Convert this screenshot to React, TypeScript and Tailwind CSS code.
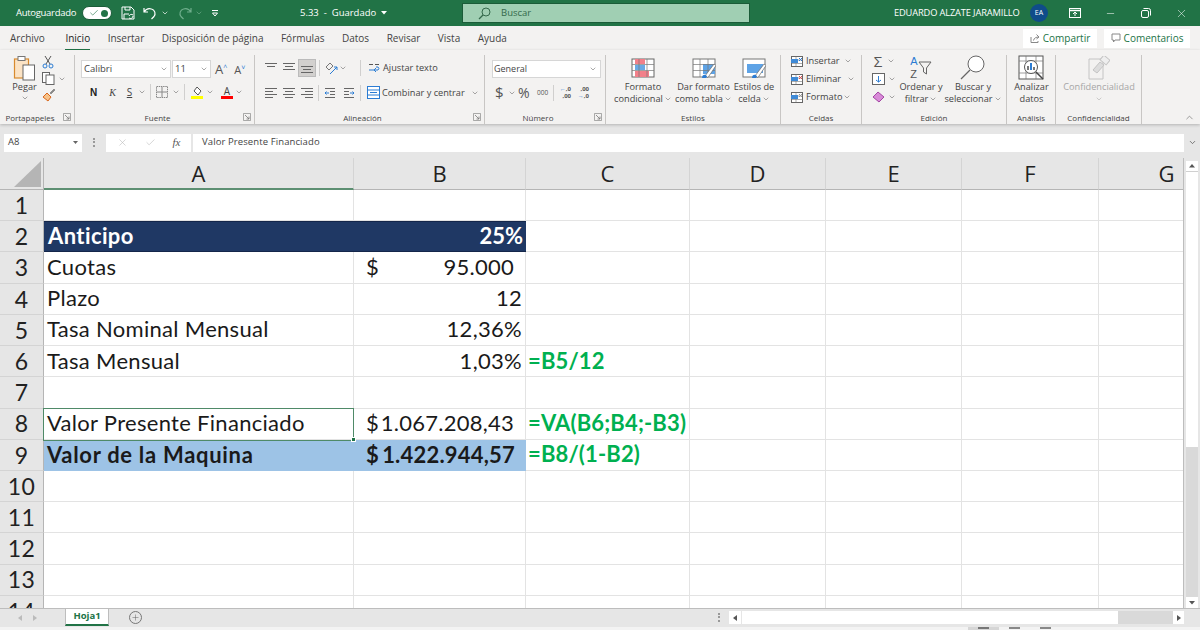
import type { ReactNode } from 'react';
import { Check, ChevronDown, ChevronUp, Minus, Plus, X } from 'lucide-react';

const ui = 'font-["Open_Sans",sans-serif]';
const sheet = 'font-["Lato",sans-serif]';

function Caret({ className = '' }: { className?: string }) {
  return <ChevronDown size={8} strokeWidth={1.5} className={`shrink-0 text-[#555] ${className}`} />;
}

function Launcher() {
  return (
    <svg width="8" height="8" viewBox="0 0 8 8" className="absolute right-[3px] bottom-[3px]" fill="none" stroke="#777">
      <path d="M.5 7.500V.5h7v7z" strokeWidth=".6" />
      <path d="M2 2l4 4M6 3.500V6H3.500" strokeWidth=".8" />
    </svg>
  );
}

function Group({ width, label, launcher = false, children }: { width: number; label: string; launcher?: boolean; children: ReactNode }) {
  return (
    <div style={{ width }} className="relative flex flex-col shrink-0 h-[69px] border-r border-[#c8c6c4]">
      {launcher && <Launcher />}
      <div className="h-[57px] flex-none">{children}</div>
      <div className={`h-[12px] flex items-center justify-center text-[8px] leading-none text-[#444] whitespace-nowrap ${launcher ? 'pr-[14px]' : ''}`}>{label}</div>
    </div>
  );
}

function Sep() {
  return <div className="w-px h-[16px] bg-[#d0cfce] shrink-0" />;
}

function AlignIcon({ lines }: { lines: [number, number][] }) {
  return (
    <svg width="14" height="14" viewBox="0 0 14 14" stroke="#666" strokeWidth="1" className="shrink-0">
      {lines.map(([x1, x2], i) => (
        <path key={i} d={`M${x1} ${2.500 + i * 3}H${x2}`} />
      ))}
    </svg>
  );
}

function BigIcon({ kind }: { kind: 'cond' | 'table' | 'style' }) {
  return (
    <svg width="24" height="20" viewBox="0 0 24 20" className="shrink-0">
      {kind === 'cond' && (
        <>
          <rect x="1" y="1" width="22" height="18" fill="#fff" stroke="#666" />
          <rect x="4" y="1" width="10" height="5" fill="#f2808a" />
          <rect x="4" y="7" width="10" height="5" fill="#6aa9e4" />
          <rect x="4" y="13" width="14" height="6" fill="#f2808a" />
        </>
      )}
      {kind !== 'cond' && (
        <>
          <rect x="1" y="1" width="22" height="18" fill="#fff" stroke="#777" />
          <rect x={kind === 'table' ? 11 : 5} y="6" width={kind === 'table' ? 12 : 16} height={kind === 'table' ? 10 : 9} fill="#5ea3e6" />
        </>
      )}
      <path d="M1 6.500H23M1 12.500H23M8 1V19M16 1V19" stroke={kind === 'style' ? 'none' : '#777'} strokeWidth=".7" />
      {kind !== 'cond' && <path d="M13 18L22 6l2 1.500-8 12z" fill="#fff" stroke="#666" strokeWidth=".7" />}
      {kind !== 'cond' && <path d="M10 20c0-3 2-4 4-3l1 1.500-1 1.500z" fill="#2b7cd3" />}
    </svg>
  );
}

function BigItem({ width, icon, lines, grey = false }: { width: number; icon: ReactNode; lines: ReactNode[]; grey?: boolean }) {
  return (
    <div style={{ width }} className={`flex flex-col items-center shrink-0 ${grey ? 'text-[#a6a6a6]' : 'text-[#444]'}`}>
      <div className="h-[25px] flex items-center justify-center">{icon}</div>
      <div className="mt-[1px] text-[9.200px] leading-[12px] text-center whitespace-nowrap flex flex-col items-center">
        {lines.map((l, i) => (
          <div key={i} className="flex items-center justify-center gap-[1px] h-[12px]">{l}</div>
        ))}
      </div>
    </div>
  );
}

function CellRow({ icon, text, width }: { icon: ReactNode; text: string; width: number }) {
  return (
    <div className="flex items-center h-[18px] text-[9.200px] text-[#444] whitespace-nowrap">
      {icon}
      <span className="ml-[2px]" style={{ width }}>{text}</span>
      <Caret />
    </div>
  );
}

function CellsIcon({ mark }: { mark: string }) {
  return (
    <svg width="14" height="13" viewBox="0 0 14 13" className="shrink-0">
      <rect x="1.500" y="1.500" width="11" height="10" fill="#fff" stroke="#666" />
      <path d="M1.500 5H12.500M1.500 8.500H12.500M6 1.500V11.500" stroke="#777" strokeWidth=".6" />
      <rect x="1" y="4" width="7" height="4" fill="#3f8ad6" />
      <path d="M9 3l3 3M12 3L9 6" stroke={mark} strokeWidth="1" />
    </svg>
  );
}

function Ribbon() {
  return (
    <div className={`relative z-10 h-[74px] bg-[#f3f2f1] flex items-start pt-[5px] shadow-[0_1px_3px_rgba(0,0,0,0.22)] ${ui}`}>
      <Group width={75} label="Portapapeles" launcher>
        <div className="flex pl-[11px]">
          <div className="flex flex-col items-center w-[27px] text-[#444]">
            <svg width="23" height="26" viewBox="0 0 23 26" fill="none">
              <rect x="1.500" y="4" width="14" height="19" fill="#fbe3c5" stroke="#d88a2e" strokeWidth="1.200" />
              <rect x="5" y="1.500" width="7" height="4" fill="#fff" stroke="#777" />
              <rect x="10" y="10" width="11.500" height="15" fill="#fff" stroke="#666" />
            </svg>
            <span className="text-[9.200px] leading-[12px]">Pegar</span>
            <Caret className="mt-[1px]" />
          </div>
          <div className="flex flex-col ml-[4px] gap-[3px]">
            <svg width="12" height="14" viewBox="0 0 12 14" fill="none" stroke="#555">
              <path d="M3 1l5 8M9 1L4 9" />
              <circle cx="3" cy="11" r="2" stroke="#2b7cd3" />
              <circle cx="9" cy="11" r="2" stroke="#2b7cd3" />
            </svg>
            <div className="flex items-center gap-[2px]">
              <svg width="14" height="13" viewBox="0 0 14 13" fill="#fff" stroke="#666">
                <rect x=".5" y=".5" width="7" height="10" />
                <rect x="4" y="3" width="8" height="9.500" />
              </svg>
              <Caret />
            </div>
            <svg width="14" height="14" viewBox="0 0 14 14" fill="none">
              <path d="M1 9l4-4 4 4-3 4z" fill="#f7c38a" stroke="#d9681d" />
              <path d="M8 5l4-4 1 1-4 4z" fill="#888" stroke="#666" strokeWidth=".5" />
            </svg>
          </div>
        </div>
      </Group>

      <Group width={180} label="Fuente" launcher>
        <div className="pl-[6px] pt-[5px] flex flex-col gap-[6px]">
          <div className="flex items-center">
            <div className="w-[90px] h-[18px] bg-white border border-[#d6d6d6] flex items-center justify-between px-[2px] text-[9.500px] text-[#444]">
              Calibri <Caret />
            </div>
            <div className="w-[39px] h-[18px] ml-[1px] bg-white border border-[#d6d6d6] flex items-center justify-between px-[2px] text-[9.500px] text-[#444]">
              11 <Caret />
            </div>
            <span className="ml-[4px] text-[13px] leading-none text-[#555]">A<sup className="text-[7px] text-[#2b7cd3]">^</sup></span>
            <span className="ml-[7px] text-[11px] leading-none text-[#555]">A<sup className="text-[7px] text-[#2b7cd3]">˅</sup></span>
          </div>
          <div className="flex items-center text-[#444] h-[16px]">
            <span className="ml-[3px] w-[19px] text-center text-[10px] font-bold font-['Liberation_Sans',sans-serif] text-[#222]">N</span>
            <span className="w-[19px] text-center text-[10px] italic font-['Liberation_Serif',serif]">K</span>
            <span className="w-[15px] text-center text-[10px] underline">S</span>
            <Caret className="ml-[1px]" />
            <div className="ml-[4px]"><Sep /></div>
            <svg width="13" height="13" viewBox="0 0 13 13" fill="none" stroke="#888" className="ml-[5px]">
              <rect x=".5" y=".5" width="11" height="11" strokeDasharray="1.500 .7" />
              <path d="M6 1v10M1 6h10" />
            </svg>
            <Caret className="ml-[3px]" />
            <div className="ml-[4px]"><Sep /></div>
            <div className="ml-[6px] w-[12px] flex flex-col items-center">
              <svg width="11" height="10" viewBox="0 0 11 10" fill="#fff" stroke="#555"><path d="M5 1l4 4-3 4-4-4z" /></svg>
              <div className="w-[12px] h-[3px] bg-[#ffff00]" />
            </div>
            <Caret className="ml-[3px]" />
            <div className="ml-[7px] w-[12px] flex flex-col items-center text-[10px] leading-[10px]">
              A
              <div className="w-[12px] h-[3px] bg-[#ff0000]" />
            </div>
            <Caret className="ml-[2px]" />
          </div>
        </div>
      </Group>

      <Group width={230} label="Alineación" launcher>
        <div className="pl-[9px] pt-[4px] flex flex-col gap-[7px]">
          <div className="flex items-center h-[18px]">
            <AlignIcon lines={[[1, 13], [3, 11]]} />
            <div className="ml-[4px]"><AlignIcon lines={[[1, 13], [3, 11], [1, 13]]} /></div>
            <div className="ml-[2px] w-[18px] h-[18px] bg-[#d2d0ce] border border-[#bbb] flex items-end justify-center pb-[1px]">
              <AlignIcon lines={[[6, 6], [1, 13], [3, 11], [1, 13]]} />
            </div>
            <div className="ml-[3px]"><Sep /></div>
            <svg width="13" height="13" viewBox="0 0 13 13" fill="none" className="ml-[5px]">
              <path d="M1 5l4-4 3 3-4 4z" stroke="#777" />
              <path d="M5 12l7-7M9 5h3v3" stroke="#2b7cd3" />
            </svg>
            <Caret className="ml-[1px]" />
            <div className="ml-[13px]"><Sep /></div>
            <div className="ml-[7px] flex items-center text-[9.200px] text-[#444] whitespace-nowrap">
              <svg width="13" height="13" viewBox="0 0 13 13" fill="none" className="mr-[2px]">
                <path d="M1 3.500h4M7 3.500h4" stroke="#555" />
                <path d="M1 9h9a2 2 0 0 0 0-3H8M6 9l2 2M6 9l2-2" stroke="#2b7cd3" />
              </svg>
              Ajustar texto
            </div>
          </div>
          <div className="flex items-center h-[18px]">
            <AlignIcon lines={[[1, 13], [1, 9], [1, 13], [1, 9]]} />
            <div className="ml-[4px]"><AlignIcon lines={[[1, 13], [3, 11], [1, 13], [3, 11]]} /></div>
            <div className="ml-[4px]"><AlignIcon lines={[[1, 13], [5, 13], [1, 13], [5, 13]]} /></div>
            <div className="ml-[4px]"><Sep /></div>
            <svg width="12" height="12" viewBox="0 0 12 12" fill="none" stroke="#666" className="ml-[5px]">
              <path d="M1 1.500h10M6 4.500h5M6 7.500h5M1 10.500h10" />
              <path d="M5 6H1m1.500-1.500L1 6l1.500 1.500" stroke="#2b7cd3" />
            </svg>
            <svg width="12" height="12" viewBox="0 0 12 12" fill="none" stroke="#666" className="ml-[7px]">
              <path d="M1 1.500h10M1 4.500h5M1 7.500h5M1 10.500h10" />
              <path d="M7 6h4M9.500 4.500L11 6 9.500 7.500" stroke="#2b7cd3" />
            </svg>
            <div className="ml-[5px]"><Sep /></div>
            <div className="ml-[6px] flex items-center text-[9.200px] text-[#444] whitespace-nowrap">
              <svg width="13" height="13" viewBox="0 0 13 13" fill="#fff" stroke="#2b7cd3" className="mr-[2px]">
                <rect x=".5" y=".5" width="12" height="12" />
                <path d="M.5 4h12M.5 9h12M3 6.500h7" />
              </svg>
              Combinar y centrar
              <Caret className="ml-[6px]" />
            </div>
          </div>
        </div>
      </Group>

      <Group width={121} label="Número" launcher>
        <div className="pl-[7px] pt-[5px] flex flex-col gap-[6px]">
          <div className="w-[109px] h-[18px] bg-white border border-[#d6d6d6] flex items-center justify-between px-[1px] pr-[3px] text-[9px] text-[#444]">
            General <Caret />
          </div>
          <div className="flex items-center h-[17px] text-[#555]">
            <span className="ml-[3px] w-[12px] text-[15px] leading-none">$</span>
            <Caret className="ml-[1px]" />
            <span className="ml-[2px] w-[15px] text-[14px] leading-none">%</span>
            <span className="ml-[4px] w-[14px] text-[6.500px]">000</span>
            <div className="ml-[2px]"><Sep /></div>
            <div className="ml-[4px] w-[13px] text-[6px] leading-[7px] font-bold text-right"><span className="text-[#2b7cd3]">←</span>,0<br />,00</div>
            <div className="ml-[5px] w-[13px] text-[6px] leading-[7px] font-bold text-right">,00<br /><span className="text-[#2b7cd3]">→</span>,0</div>
          </div>
        </div>
      </Group>

      <Group width={175} label="Estilos">
        <div className="flex pl-[6px]">
          <BigItem width={62} icon={<BigIcon kind="cond" />} lines={['Formato', <>condicional <Caret /></>]} />
          <BigItem width={59} icon={<BigIcon kind="table" />} lines={['Dar formato', <>como tabla <Caret /></>]} />
          <BigItem width={42} icon={<BigIcon kind="style" />} lines={['Estilos de', <>celda <Caret /></>]} />
        </div>
      </Group>

      <Group width={81} label="Celdas">
        <div className="pl-[9px] flex flex-col -mt-[3px]">
          <CellRow icon={<CellsIcon mark="#2b7cd3" />} text="Insertar" width={38} />
          <CellRow icon={<CellsIcon mark="#e04a4a" />} text="Eliminar" width={41} />
          <CellRow icon={<CellsIcon mark="#999" />} text="Formato" width={37} />
        </div>
      </Group>

      <Group width={145} label="Edición">
        <div className="flex pl-[10px]">
          <div className="flex flex-col w-[25px] -mt-[3px]">
            <div className="h-[18px] flex items-center gap-[3px]">
              <span className="w-[12px] text-center text-[15px] leading-none text-[#555]">Σ</span><Caret />
            </div>
            <div className="h-[18px] flex items-center gap-[3px]">
              <svg width="13" height="12" viewBox="0 0 13 12" fill="#fff" stroke="#666" className="shrink-0">
                <rect x=".5" y=".5" width="12" height="11" />
                <path d="M6.500 3v6M4 7l2.500 2L9 7" stroke="#2b7cd3" fill="none" />
              </svg>
              <Caret />
            </div>
            <div className="h-[18px] flex items-center gap-[3px]">
              <svg width="13" height="12" viewBox="0 0 13 12" className="shrink-0">
                <path d="M1 6l5-5 6 5-5 5z" fill="#d88ad8" stroke="#a347a3" />
              </svg>
              <Caret />
            </div>
          </div>
          <BigItem
            width={48}
            icon={
              <div className="flex items-center text-[11px] leading-[13px] font-['Liberation_Sans',sans-serif]">
                <span className="flex flex-col"><span className="text-[#2b7cd3] h-[13px]">A</span><span className="text-[#555] h-[13px]">Z</span></span>
                <svg width="14" height="14" viewBox="0 0 14 14" fill="none" stroke="#666"><path d="M1 1h12L8.500 7v6l-3-2V7z" /></svg>
              </div>
            }
            lines={['Ordenar y', <>filtrar <Caret /></>]}
          />
          <BigItem
            width={56}
            icon={
              <svg width="26" height="25" viewBox="0 0 26 25" fill="none" stroke="#666" strokeWidth="1">
                <circle cx="16" cy="9" r="8" fill="#fff" />
                <path d="M10 15L1 24" strokeWidth="1.200" />
              </svg>
            }
            lines={['Buscar y', <>seleccionar <Caret /></>]}
          />
        </div>
      </Group>

      <Group width={49} label="Análisis">
        <BigItem
          width={49}
          icon={
            <svg width="27" height="26" viewBox="0 0 27 26" fill="none" stroke="#777">
              <rect x="1" y="1" width="24" height="23" fill="#fff" stroke="#555" />
              <path d="M1 6h24M1 18h24M8 1v23M18 1v23" strokeWidth=".7" />
              <circle cx="13" cy="12" r="6.500" fill="#fff" stroke="#555" />
              <path d="M10 15v-4" stroke="#777" strokeWidth="2" />
              <path d="M13 15V8" stroke="#2b7cd3" strokeWidth="2" />
              <path d="M16 15v-3" stroke="#777" strokeWidth="2" />
              <path d="M18 17l7 7" stroke="#444" strokeWidth="1.500" />
            </svg>
          }
          lines={['Analizar', 'datos']}
        />
      </Group>

      <Group width={86} label="Confidencialidad">
        <BigItem
          width={86}
          grey
          icon={
            <svg width="22" height="24" viewBox="0 0 22 24" fill="none" stroke="#c4c4c4">
              <path d="M1 3h14v20H1z" />
              <path d="M5 14l7-8 4 3-7 8z" fill="#ddd" />
              <rect x="13" y="1" width="8" height="6" transform="rotate(40 17 4)" fill="#eee" />
            </svg>
          }
          lines={['Confidencialidad', <Caret className="opacity-50" />]}
        />
      </Group>

      <div className="flex-1 h-[69px] flex items-end justify-end pr-[5px] pb-[1px]">
        <ChevronUp size={11} strokeWidth={1.200} className="text-[#555]" />
      </div>
    </div>
  );
}

function TitleBar() {
  return (
    <div className={`h-[26px] bg-[#217346] text-white flex items-center text-[10px] ${ui}`}>
      <span className="ml-[16px] w-[60px] whitespace-nowrap text-[9.500px] tracking-[-0.3px]">Autoguardado</span>
      <div className="ml-[6px] w-[30px] h-[14px] bg-white rounded-full flex items-center justify-between px-[3px] border border-[#1a5c38]">
        <Check size={10} strokeWidth={1.500} className="text-[#217346] ml-[3px]" />
        <div className="w-[7px] h-[7px] rounded-full bg-[#217346]" />
      </div>
      <svg width="14" height="14" viewBox="0 0 14 14" fill="none" stroke="#fff" className="ml-[9px]">
        <path d="M1 1h9l3 3v9H1z" />
        <path d="M4 1v3h5V1M3 13V8h5" />
        <path d="M8 10a2.500 2.500 0 0 1 4-1M12 10a2.500 2.500 0 0 1-4 2" />
      </svg>
      <svg width="15" height="14" viewBox="0 0 15 14" fill="none" stroke="#fff" className="ml-[8px]">
        <path d="M1 2v4h4M1 6c2-3 5-4 7.500-3C12 4 13 8 11 10.500L8.500 13" strokeWidth="1.200" />
      </svg>
      <ChevronDown size={8} className="ml-[3px] text-white" />
      <svg width="15" height="14" viewBox="0 0 15 14" fill="none" stroke="#6fae8c" className="ml-[8px]">
        <path d="M14 2v4h-4M14 6c-2-3-5-4-7.500-3C3 4 2 8 4 10.500L6.500 13" strokeWidth="1.200" />
      </svg>
      <ChevronDown size={8} className="ml-[3px] text-[#6fae8c]" />
      <svg width="8" height="8" viewBox="0 0 8 8" fill="none" stroke="#fff" className="ml-[8px]">
        <path d="M1 1.500h6M1.500 4h5L4 7z" />
      </svg>
      <span className="ml-[81px] w-[162px] flex items-center whitespace-nowrap text-[9.500px]">
        5.33 &nbsp;-&nbsp; Guardado
        <svg width="6" height="4" viewBox="0 0 6 4" fill="#fff" className="ml-[5px]"><path d="M0 0h6L3 3.500z" /></svg>
      </span>
      <div className="w-[288px] h-[20px] bg-[#a0cfb3] border border-[#1a5c38] flex items-center text-[#33694b] text-[9.500px]">
        <svg width="13" height="13" viewBox="0 0 13 13" fill="none" stroke="#33694b" className="ml-[15px]">
          <circle cx="8" cy="5" r="4" />
          <path d="M5 8l-4 4" strokeWidth="1.200" />
        </svg>
        <span className="ml-[10px]">Buscar</span>
      </div>
      <span className="ml-[144px] w-[127px] whitespace-nowrap text-[9.300px] tracking-[-0.15px]">EDUARDO ALZATE JARAMILLO</span>
      <div className="ml-[9px] w-[18px] h-[18px] rounded-full bg-[#0f4c8a] flex items-center justify-center text-[7px]">EA</div>
      <svg width="12" height="10" viewBox="0 0 12 10" fill="none" stroke="#fff" className="ml-[21px]">
        <rect x=".5" y=".5" width="11" height="9" />
        <path d="M.5 2.500h11" strokeWidth="1.500" />
        <path d="M6 8V4M4 6l2-2 2 2" />
      </svg>
      <Minus size={11} strokeWidth={1.200} className="ml-[24px]" />
      <svg width="10" height="10" viewBox="0 0 10 10" fill="none" stroke="#fff" className="ml-[25px]">
        <rect x=".5" y="2.500" width="7" height="7" rx="1.500" />
        <path d="M2.500.5h5a2 2 0 0 1 2 2v5" />
      </svg>
      <X size={13} strokeWidth={1} className="ml-[24px]" />
    </div>
  );
}

function TabsBar() {
  const tabs = ['Archivo', 'Inicio', 'Insertar', 'Disposición de página', 'Fórmulas', 'Datos', 'Revisar', 'Vista', 'Ayuda'];
  return (
    <div className={`h-[24px] bg-[#f3f2f1] flex items-center text-[10px] text-[#444] ${ui}`}>
      <div className="flex ml-[10px] gap-[17.500px] flex-1">
        {tabs.map(t => (
          <div key={t} className={`relative whitespace-nowrap ${t === 'Inicio' ? 'text-[#222] ml-[3px]' : ''}`}>
            {t}
            {t === 'Inicio' && <div className="absolute left-0 right-0 -bottom-[5px] h-[2px] bg-[#217346]" />}
          </div>
        ))}
      </div>
      <div className="w-[74px] h-[19px] bg-white flex items-center justify-center gap-[3px] text-[#217346] text-[10px]">
        <svg width="10" height="10" viewBox="0 0 10 10" fill="none" stroke="#888"><path d="M6.500 1.500L9 4 6.500 6M9 4C6 4 4 5 3.500 7.500M1 4v5.500h7V8" /></svg>
        Compartir
      </div>
      <div className="ml-[7px] mr-[10px] w-[86px] h-[19px] bg-white flex items-center justify-center gap-[3px] text-[#217346] text-[10px]">
        <svg width="10" height="10" viewBox="0 0 10 10" fill="none" stroke="#888"><path d="M1 1h8v6H4L2.500 9V7H1z" /></svg>
        Comentarios
      </div>
    </div>
  );
}

function FormulaBar() {
  return (
    <div className={`h-[34px] bg-[#e6e6e6] flex items-center pt-[3px] text-[9.500px] text-[#444] ${ui}`}>
      <div className="ml-[4px] w-[78px] h-[18px] bg-white flex items-center justify-between px-[4px]">
        A8
        <svg width="5" height="3" viewBox="0 0 5 3" fill="#666"><path d="M0 0h5L2.500 3z" /></svg>
      </div>
      <div className="ml-[11px] w-[2px] h-[9px] border-l-2 border-dotted border-[#999]" />
      <div className="ml-[11px] w-[85px] h-[18px] bg-white flex items-center justify-around px-[2px] text-[#b5b5b5]">
        <X size={11} strokeWidth={1.200} />
        <Check size={11} strokeWidth={1.200} />
        <span className="font-['Liberation_Serif',serif] italic text-[11px] text-[#555]">fx</span>
      </div>
      <div className="ml-[2px] flex-1 h-[18px] bg-white flex items-center pl-[9px] tracking-[0.1px]">Valor Presente Financiado</div>
      <div className="w-[16px] flex justify-center"><ChevronDown size={9} className="text-[#555]" /></div>
    </div>
  );
}

type CellProps = { children?: ReactNode; className?: string };

function Cell({ children, className = '' }: CellProps) {
  return (
    <div className={`border-r border-b border-[#e3e3e3] flex items-center whitespace-nowrap px-[3px] pb-[2px] min-w-0 ${className}`}>
      {children}
    </div>
  );
}

function Blank({ count }: { count: number }) {
  return (
    <>
      {Array.from({ length: count }).map((_, i) => (
        <Cell key={i} />
      ))}
    </>
  );
}

function RowHead({ n }: { n: number }) {
  return (
    <div className="flex items-center justify-center bg-[#e6e6e6] border-r border-r-[#b5b5b5] border-b border-b-[#d4d4d4] text-[23px] text-[#222]">
      {n}
    </div>
  );
}

function Money({ amount, bold = false }: { amount: string; bold?: boolean }) {
  return (
    <div className={`w-full flex justify-between pl-[9px] pr-[8px] ${bold ? 'font-bold tracking-[0.2px]' : 'tracking-[0.25px]'}`}>
      <span>$</span>
      <span>{amount}</span>
    </div>
  );
}

function Row({ n, a, b, c, aClass = '', bClass = '' }: { n: number; a?: ReactNode; b?: ReactNode; c?: ReactNode; aClass?: string; bClass?: string }) {
  return (
    <>
      <RowHead n={n} />
      <Cell className={aClass}>{a}</Cell>
      <Cell className={bClass}>{b}</Cell>
      <Cell className="font-bold text-[#00b050] overflow-visible pl-[2px] tracking-[0.15px]">{c}</Cell>
      <Blank count={4} />
    </>
  );
}

function Grid() {
  const cols = ['A', 'B', 'C', 'D', 'E', 'F', 'G'];
  return (
    <div className={`flex-1 min-h-0 flex ${sheet} text-[22px] tracking-[0.3px] text-[#1a1a1a] bg-white`}>
      <div className="flex-1 min-w-0 overflow-hidden border-r border-[#bdbdbd]">
        <div className="grid grid-cols-[44px_310px_172px_164px_136px_136px_137px_136px] grid-rows-[32px] auto-rows-[31.230px]">
          <div className="bg-[#e6e6e6] border-r border-b border-[#b5b5b5] flex items-end justify-end pr-[2px] pb-[2px]">
            <svg width="27" height="26" viewBox="0 0 27 26" fill="#b5b5b5"><path d="M27 0v26H0z" /></svg>
          </div>
          {cols.map(c => (
            <div
              key={c}
              className={`flex items-center justify-center border-r border-r-[#d4d4d4] bg-[#e6e6e6] text-[#222] font-["Open_Sans",sans-serif] text-[22px] tracking-normal ${
                c === 'A' ? 'border-b-2 border-b-[#5d8f72]' : 'border-b border-b-[#b5b5b5]'
              }`}
            >
              {c}
            </div>
          ))}
          <Row n={1} />
          <Row
            n={2}
            a={<span className="pl-[1px] font-bold text-white tracking-[0.4px]">Anticipo</span>}
            aClass="bg-[#1f3864] border-y border-y-[#14264a] border-r-0"
            b={<span className="w-full text-right font-bold text-white tracking-normal">25%</span>}
            bClass="bg-[#1f3864] border-y border-y-[#14264a] border-r-0"
          />
          <Row n={3} a="Cuotas" b={<Money amount="95.000" />} />
          <Row n={4} a="Plazo" b={<span className="w-full text-right">12</span>} />
          <Row n={5} a="Tasa Nominal Mensual" b={<span className="w-full text-right">12,36%</span>} />
          <Row n={6} a="Tasa Mensual" b={<span className="w-full text-right">1,03%</span>} c="=B5/12" />
          <Row n={7} />
          <Row
            n={8}
            a={
              <>
                Valor Presente Financiado
                <div className="absolute -left-px -top-px w-[311px] h-[33px] border-[1.500px] border-[#4f8a68] pointer-events-none" />
                <div className="absolute -right-[3px] -bottom-[3px] w-[5px] h-[5px] bg-[#217346] border border-white" />
              </>
            }
            aClass="relative"
            b={<Money amount="1.067.208,43" />}
            c="=VA(B6;B4;-B3)"
          />
          <Row
            n={9}
            a={<span className="font-bold tracking-[0.7px]">Valor de la Maquina</span>}
            aClass="bg-[#9dc3e6] border-r-0 border-b-0"
            b={<Money amount="1.422.944,57" bold />}
            bClass="bg-[#9dc3e6] border-r-0 border-b-0"
            c="=B8/(1-B2)"
          />
          {[10, 11, 12, 13, 14].map(n => (
            <Row key={n} n={n} />
          ))}
        </div>
      </div>
      <div className="w-[16px] shrink-0 bg-[#e6e6e6] flex flex-col px-[2px] pt-[3px]">
        <div className="h-[11px] bg-white border-b border-[#d0d0d0] flex items-center justify-center">
          <svg width="6" height="4" viewBox="0 0 6 4" fill="#555"><path d="M0 3.500h6L3 0z" /></svg>
        </div>
        <div className="h-[275px] bg-white" />
        <div className="flex-1 bg-[#d9d9d9]" />
        <div className="h-[11px] bg-white flex items-center justify-center">
          <svg width="6" height="4" viewBox="0 0 6 4" fill="#555"><path d="M0 0h6L3 3.500z" /></svg>
        </div>
      </div>
    </div>
  );
}

function SheetBar() {
  return (
    <div className={`h-[22px] shrink-0 flex flex-col ${ui}`}>
      <div className="h-[19px] bg-[#e6e6e6] border-t border-[#bdbdbd] flex items-start">
        <svg width="4" height="6" viewBox="0 0 4 6" fill="#bbb" className="ml-[18px] mt-[6px] shrink-0"><path d="M4 0v6L0 3z" /></svg>
        <svg width="4" height="6" viewBox="0 0 4 6" fill="#bbb" className="ml-[11px] mt-[6px] shrink-0"><path d="M0 0v6l4-3z" /></svg>
        <div className="ml-[28px] w-[44px] h-[17px] bg-white border-x border-b-2 border-x-[#bdbdbd] border-b-[#217346] flex items-center justify-center font-bold text-[#217346] text-[9.500px]">
          Hoja1
        </div>
        <div className="ml-[20px] mt-[2px] w-[13px] h-[13px] rounded-full border border-[#777] flex items-center justify-center">
          <Plus size={9} strokeWidth={1.200} className="text-[#555]" />
        </div>
        <div className="ml-[576px] mt-[4px] w-[2px] h-[9px] border-l-2 border-dotted border-[#999]" />
        <div className="ml-[9px] w-[12px] mt-[2px] h-[13px] bg-white flex items-center justify-center">
          <svg width="4" height="6" viewBox="0 0 4 6" fill="#555"><path d="M4 0v6L0 3z" /></svg>
        </div>
        <div className="w-[376px] mt-[2px] h-[13px] bg-white ml-px" />
        <div className="w-[55px] mt-[2px] h-[13px] bg-[#d9d9d9]" />
        <div className="w-[11px] mt-[2px] h-[13px] bg-white flex items-center justify-center">
          <svg width="4" height="6" viewBox="0 0 4 6" fill="#555"><path d="M0 0v6l4-3z" /></svg>
        </div>
      </div>
      <div className="h-[3px] bg-[#f3f3f3] flex">
        <div className="ml-[968px] w-[31px] bg-[#d6d6d6] flex justify-center">
          <div className="w-[11px] h-[2px] bg-[#777]" />
        </div>
        <div className="ml-[10px] w-[11px] h-[2px] bg-[#888]" />
        <div className="ml-[20px] w-[11px] h-[2px] bg-[#888]" />
      </div>
    </div>
  );
}

export default function App() {
  return (
    <div className="w-[1200px] h-[630px] flex flex-col overflow-hidden bg-white">
      <TitleBar />
      <TabsBar />
      <Ribbon />
      <FormulaBar />
      <Grid />
      <SheetBar />
    </div>
  );
}
